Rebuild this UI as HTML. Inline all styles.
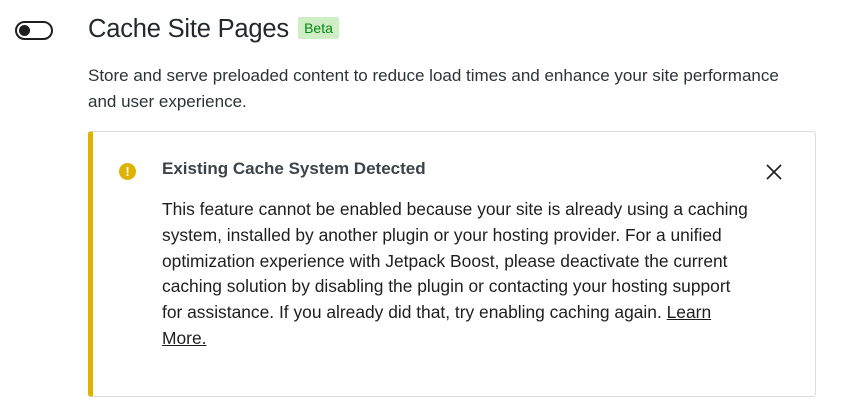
<!DOCTYPE html>
<html><head><style>
body{margin:0;width:850px;height:412px;background:#fff;font-family:"Liberation Sans",sans-serif;color:#1e1e1e;position:relative;overflow:hidden}
.tog{position:absolute;left:15px;top:21px;width:34px;height:15px;border:2px solid #1e1e1e;border-radius:10px}
.tog:after{content:"";position:absolute;left:2px;top:2px;width:11px;height:11px;border-radius:50%;background:#1e1e1e}
h1{position:absolute;left:88px;top:15px;margin:0;font-size:25.5px;font-weight:normal;color:#23282d;letter-spacing:-0.2px}
.beta{position:absolute;left:298px;top:17px;width:41px;height:22px;background:#d0eec6;color:#008710;font-size:14px;line-height:22px;text-align:center;border-radius:2px}
.desc{position:absolute;left:88px;top:63px;width:720px;font-size:17px;line-height:26px;color:#2c3338}
.box{position:absolute;left:88px;top:131px;width:722px;height:264px;border:1px solid #dcdcde;border-left:5px solid #e0b200;border-radius:3px}
.ic{position:absolute;left:119px;top:163px;width:17px;height:17px;border-radius:50%;background:#e0b200;color:#fff;font-weight:bold;font-size:13px;line-height:17px;text-align:center}
.ht{position:absolute;left:162px;top:159px;font-size:17px;font-weight:bold;color:#3c434a}
.bt{position:absolute;left:162px;top:197px;width:592px;font-size:17.4px;line-height:25.8px;color:#1e1e1e}
.bt a{color:#1e1e1e;text-decoration:underline}
</style></head><body>
<div class="tog"></div>
<h1>Cache Site Pages</h1>
<div class="beta">Beta</div>
<div class="desc">Store and serve preloaded content to reduce load times and enhance your site performance and user experience.</div>
<div class="box"></div>
<div class="ic">!</div>
<div class="ht">Existing Cache System Detected</div>
<svg style="position:absolute;left:766px;top:164px" width="16" height="16"><path d="M1 1L15 15M15 1L1 15" stroke="#1e1e1e" stroke-width="1.6"/></svg>
<div class="bt">This feature cannot be enabled because your site is already using a caching system, installed by another plugin or your hosting provider. For a unified optimization experience with Jetpack Boost, please deactivate the current caching solution by disabling the plugin or contacting your hosting support for assistance. If you already did that, try enabling caching again. <a>Learn More.</a></div>
</body></html>
